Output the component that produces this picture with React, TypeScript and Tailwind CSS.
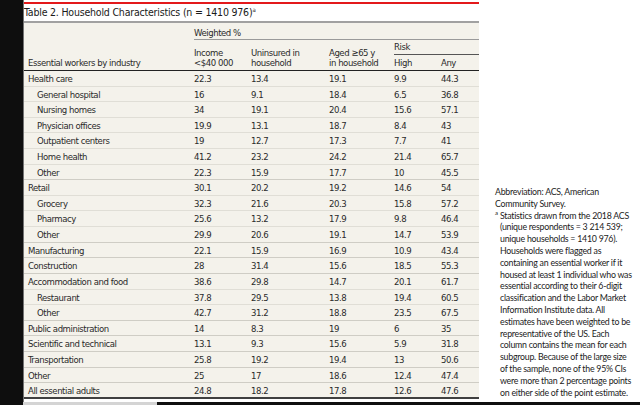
import React from 'react'

type Row = { label: string; sub?: boolean; end?: boolean; v: string[] }

const rows: Row[] = [
  { label: 'Health care', v: ['22.3', '13.4', '19.1', '9.9', '44.3'] },
  { label: 'General hospital', sub: true, v: ['16', '9.1', '18.4', '6.5', '36.8'] },
  { label: 'Nursing homes', sub: true, v: ['34', '19.1', '20.4', '15.6', '57.1'] },
  { label: 'Physician offices', sub: true, v: ['19.9', '13.1', '18.7', '8.4', '43'] },
  { label: 'Outpatient centers', sub: true, v: ['19', '12.7', '17.3', '7.7', '41'] },
  { label: 'Home health', sub: true, v: ['41.2', '23.2', '24.2', '21.4', '65.7'] },
  { label: 'Other', sub: true, end: true, v: ['22.3', '15.9', '17.7', '10', '45.5'] },
  { label: 'Retail', v: ['30.1', '20.2', '19.2', '14.6', '54'] },
  { label: 'Grocery', sub: true, v: ['32.3', '21.6', '20.3', '15.8', '57.2'] },
  { label: 'Pharmacy', sub: true, v: ['25.6', '13.2', '17.9', '9.8', '46.4'] },
  { label: 'Other', sub: true, end: true, v: ['29.9', '20.6', '19.1', '14.7', '53.9'] },
  { label: 'Manufacturing', end: true, v: ['22.1', '15.9', '16.9', '10.9', '43.4'] },
  { label: 'Construction', end: true, v: ['28', '31.4', '15.6', '18.5', '55.3'] },
  { label: 'Accommodation and food', v: ['38.6', '29.8', '14.7', '20.1', '61.7'] },
  { label: 'Restaurant', sub: true, v: ['37.8', '29.5', '13.8', '19.4', '60.5'] },
  { label: 'Other', sub: true, end: true, v: ['42.7', '31.2', '18.8', '23.5', '67.5'] },
  { label: 'Public administration', end: true, v: ['14', '8.3', '19', '6', '35'] },
  { label: 'Scientific and technical', end: true, v: ['13.1', '9.3', '15.6', '5.9', '31.8'] },
  { label: 'Transportation', end: true, v: ['25.8', '19.2', '19.4', '13', '50.6'] },
  { label: 'Other', end: true, v: ['25', '17', '18.6', '12.4', '47.4'] },
  { label: 'All essential adults', v: ['24.8', '18.2', '17.8', '12.6', '47.6'] },
]

const noteLines = [
  'Statistics drawn from the 2018 ACS',
  '(unique respondents = 3 214 539;',
  'unique households = 1410 976).',
  'Households were flagged as',
  'containing an essential worker if it',
  'housed at least 1 individual who was',
  'essential according to their 6-digit',
  'classification and the Labor Market',
  'Information Institute data. All',
  'estimates have been weighted to be',
  'representative of the US. Each',
  'column contains the mean for each',
  'subgroup. Because of the large size',
  'of the sample, none of the 95% CIs',
  'were more than 2 percentage points',
  'on either side of the point estimate.',
]

const cols = 'grid grid-cols-[170px_57px_78px_65px_47px_38px]'
const tableFont = { fontFamily: '"DejaVu Sans Condensed", "Liberation Sans Narrow", "Roboto", sans-serif' }

export default function App() {
  return (
    <div className="h-[405px] w-[640px] overflow-hidden bg-[#0e0e0e] pl-[23px]">
      <div className="h-[402px] border-l border-neutral-500 bg-white pt-[2px]">
        <div
          className="flex h-[21px] w-[455px] items-center border-t-2 border-b-2 border-t-[#e3191b] border-b-neutral-400 text-[10.5px] tracking-[-0.2px] text-[#1a1a1a]"
          style={tableFont}
        >
          Table 2. Household Characteristics (n = 1410 976)<sup className="text-[6px]">a</sup>
        </div>
        <div className="flex">
          <div
            className="h-[376px] w-[455px] shrink-0 border-b-2 border-b-neutral-700 bg-[#f4f2eb] text-[9.5px] tracking-[-0.45px] text-[#2a2a2a]"
            style={tableFont}
          >
            <div className="flex h-[48px] border-b border-[#222]">
              <div className="flex w-[170px] items-end pb-[2px] pl-[4px] leading-[11px]">
                Essential workers by industry
              </div>
              <div className="flex flex-1 flex-col">
                <div className="flex h-[17px] items-center border-b border-[#9a9a9a] pt-[4px]">Weighted %</div>
                <div className="flex flex-1">
                  <div className="flex w-[57px] flex-col justify-end pb-[2px] leading-[10px]">
                    <span>Income</span>
                    <span>&lt;$40 000</span>
                  </div>
                  <div className="flex w-[78px] flex-col justify-end pb-[2px] leading-[10px]">
                    <span>Uninsured in</span>
                    <span>household</span>
                  </div>
                  <div className="flex w-[65px] flex-col justify-end pb-[2px] leading-[10px]">
                    <span>Aged ≥65 y</span>
                    <span>in household</span>
                  </div>
                  <div className="flex flex-1 flex-col">
                    <div className="flex h-[15px] items-center border-b border-[#555] pt-[1px]">Risk</div>
                    <div className="flex flex-1 items-end pb-[2px] leading-[10px]">
                      <span className="w-[47px]">High</span>
                      <span>Any</span>
                    </div>
                  </div>
                </div>
              </div>
            </div>
            {rows.map((r, i) => (
              <div
                key={i}
                className={`${cols} h-[15.62px] items-center pt-[1px] ${
                  i === rows.length - 1 ? '' : r.end ? 'border-b border-[#cfcdc5]' : 'border-b border-[#e0ded6]'
                }`}
              >
                <span className={r.sub ? 'pl-[13px]' : 'pl-[4px]'}>{r.label}</span>
                {r.v.map((x, j) => (
                  <span key={j}>{x}</span>
                ))}
              </div>
            ))}
          </div>
          <div
            className="ml-[16px] mt-[163px] w-[144px] shrink-0 text-[8.8px] leading-[11.8px] tracking-[-0.25px] text-[#222]"
            style={{ fontFamily: 'Lato, "Open Sans", sans-serif' }}
          >
            <div className="whitespace-nowrap">Abbreviation: ACS, American</div>
            <div className="whitespace-nowrap">Community Survey.</div>
            {noteLines.map((l, i) => (
              <div key={i} className="relative whitespace-nowrap pl-[5px]">
                {i === 0 && <span className="absolute left-0 top-[-3px] text-[6px]">a</span>}
                {l}
              </div>
            ))}
          </div>
        </div>
      </div>
      <div className="h-[3px] w-[134px] bg-neutral-300" />
    </div>
  )
}
